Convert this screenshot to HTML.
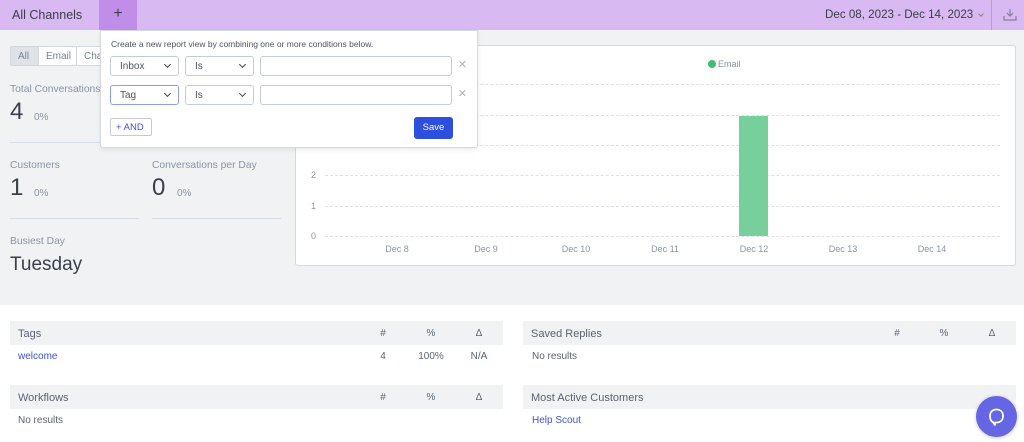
<!DOCTYPE html>
<html><head><meta charset="utf-8"><style>
*{box-sizing:border-box;margin:0;padding:0}
body{width:1024px;height:442px;overflow:hidden;background:#fff;font-family:"Liberation Sans",sans-serif;color:#3c4858;position:relative}
.a{position:absolute}
.t{font-size:10px;color:#8a94a3}
.sel{position:absolute;height:20px;border:1px solid #c6ccd4;border-radius:3px;background:#fff;font-size:10px;color:#4a5563;padding:4px 0 0 9px}
.sel:after{content:"";position:absolute;right:8px;top:5px;width:4px;height:4px;border-right:1.3px solid #444;border-bottom:1.3px solid #444;transform:rotate(45deg)}
.grid{position:absolute;left:325px;width:675px;border-top:1px dashed #dde1e6}
.yl{position:absolute;left:311px;font-size:9px;color:#8a94a3}
.xl{position:absolute;top:244px;font-size:9px;color:#8a94a3;width:40px;text-align:center}
.th{position:absolute;height:24px;background:#f1f2f4;font-size:11px;color:#5a6472;padding:7px 0 0 8px}
.c{position:absolute;font-size:10px;color:#5a6472;width:30px;text-align:center}
</style></head><body>
<div class="a" style="left:0;top:0;width:1024px;height:30px;background:#d8b9f2"></div>
<div class="a" style="left:12px;top:8px;font-size:12.5px;color:#3a3f4a">All Channels</div>
<div class="a" style="left:99px;top:0;width:38px;height:30px;background:#c08ee8;text-align:center;font-size:16px;line-height:28px;color:#3a3f4a">+</div>
<div class="a" style="left:825px;top:8px;font-size:11.6px;color:#3a3f4a">Dec 08, 2023 - Dec 14, 2023</div>
<div class="a" style="left:979px;top:12px;width:4px;height:4px;border-right:1px solid #888;border-bottom:1px solid #888;transform:rotate(45deg)"></div>
<div class="a" style="left:991px;top:0;width:1px;height:30px;background:#b99ad6"></div>
<svg class="a" style="left:1003px;top:8px" width="14" height="13" viewBox="0 0 14 13"><path d="M7 1v7M4 5l3 3 3-3M1 8v4h12V8" fill="none" stroke="#8a7f99" stroke-width="1.2"/></svg>
<div class="a" style="left:0;top:30px;width:1024px;height:275px;background:#f1f2f4"></div>
<div class="a" style="left:10px;top:46px;width:100px;height:20px;border:1px solid #d3d8de;border-radius:2px;background:#fff;font-size:10px;color:#7a8491">
<span class="a" style="left:0;top:0;width:27px;height:18px;background:#dfe3e8;padding:4px 0 0 7px">All</span>
<span class="a" style="left:27px;top:0;width:1px;height:18px;background:#d3d8de"></span>
<span class="a" style="left:35px;top:4px">Email</span>
<span class="a" style="left:65px;top:0;width:1px;height:18px;background:#d3d8de"></span>
<span class="a" style="left:73px;top:4px">Cha</span></div>
<div class="a" style="left:10px;top:84px;font-size:10.3px;color:#8a94a3">Total Conversations</div>
<div class="a" style="left:10px;top:98px;font-size:24px;color:#3a3f4a">4</div>
<div class="a t" style="left:34px;top:112px">0%</div>
<div class="a" style="left:10px;top:142px;width:129px;height:1px;background:#d5dde6"></div>
<div class="a" style="left:10px;top:160px;font-size:10.3px;color:#8a94a3">Customers</div>
<div class="a" style="left:10px;top:174px;font-size:24px;color:#3a3f4a">1</div>
<div class="a t" style="left:34px;top:188px">0%</div>
<div class="a" style="left:152px;top:160px;font-size:10.3px;color:#8a94a3">Conversations per Day</div>
<div class="a" style="left:152px;top:174px;font-size:24px;color:#3a3f4a">0</div>
<div class="a t" style="left:177px;top:188px">0%</div>
<div class="a" style="left:10px;top:218px;width:129px;height:1px;background:#d5dde6"></div>
<div class="a" style="left:152px;top:218px;width:129px;height:1px;background:#d5dde6"></div>
<div class="a" style="left:10px;top:236px;font-size:10.3px;color:#8a94a3">Busiest Day</div>
<div class="a" style="left:10px;top:254px;font-size:19px;color:#3a3f4a">Tuesday</div>
<div class="a" style="left:295px;top:45px;width:721px;height:221px;background:#fff;border:1px solid #d5dae0;border-radius:3px"></div>
<div class="a" style="left:708px;top:60px;width:8px;height:8px;border-radius:50%;background:#3fc06e"></div>
<div class="a" style="left:718px;top:59px;font-size:9px;color:#8a94a3">Email</div>
<div class="grid" style="top:84px"></div><div class="grid" style="top:115px"></div><div class="grid" style="top:145px"></div>
<div class="grid" style="top:175px"></div><div class="grid" style="top:206px"></div><div class="grid" style="top:236px"></div>
<div class="yl" style="top:170px">2</div><div class="yl" style="top:201px">1</div><div class="yl" style="top:231px">0</div>
<div class="a" style="left:739px;top:116px;width:29px;height:120px;background:#77d09c"></div>
<div class="xl" style="left:377px">Dec 8</div><div class="xl" style="left:466px">Dec 9</div><div class="xl" style="left:556px">Dec 10</div><div class="xl" style="left:645px">Dec 11</div><div class="xl" style="left:734px">Dec 12</div><div class="xl" style="left:823px">Dec 13</div><div class="xl" style="left:912px">Dec 14</div>
<div class="a" style="left:100px;top:30px;width:378px;height:118px;background:#fff;border:1px solid #d5dae0;border-radius:0 0 3px 3px;box-shadow:0 2px 5px rgba(0,0,0,.08)"></div>
<div class="a" style="left:111px;top:39px;font-size:8.5px;color:#4a5563">Create a new report view by combining one or more conditions below.</div>
<div class="sel" style="left:110px;top:56px;width:69px">Inbox</div>
<div class="sel" style="left:185px;top:56px;width:69px">Is</div>
<div class="a" style="left:260px;top:56px;width:192px;height:20px;border:1px solid #c6ccd4;border-radius:3px"></div>
<div class="a" style="left:458px;top:56px;font-size:15px;color:#b0b6bd">×</div>
<div class="sel" style="left:110px;top:85px;width:69px;border-color:#8a9df0">Tag</div>
<div class="sel" style="left:185px;top:85px;width:69px">Is</div>
<div class="a" style="left:260px;top:85px;width:192px;height:20px;border:1px solid #c6ccd4;border-radius:3px"></div>
<div class="a" style="left:458px;top:85px;font-size:15px;color:#b0b6bd">×</div>
<div class="a" style="left:110px;top:118px;width:42px;height:18px;border:1px solid #c6ccd4;border-radius:2px;font-size:9.5px;color:#3c52d8;padding:3px 0 0 5px">+ AND</div>
<div class="a" style="left:414px;top:117px;width:39px;height:22px;background:#2d4fe0;border-radius:3px;color:#fff;font-size:9.5px;text-align:center;line-height:22px">Save</div>
<div class="th" style="left:10px;top:321px;width:493px">Tags</div>
<div class="c" style="left:368px;top:328px">#</div><div class="c" style="left:416px;top:328px">%</div><div class="c" style="left:464px;top:328px">Δ</div>
<div class="a" style="left:18px;top:351px;font-size:10px;color:#3c52d8">welcome</div>
<div class="c" style="left:368px;top:351px">4</div><div class="c" style="left:409px;top:351px;width:44px">100%</div><div class="c" style="left:464px;top:351px">N/A</div>
<div class="th" style="left:10px;top:385px;width:493px">Workflows</div>
<div class="c" style="left:368px;top:392px">#</div><div class="c" style="left:416px;top:392px">%</div><div class="c" style="left:464px;top:392px">Δ</div>
<div class="a" style="left:18px;top:415px;font-size:10px;color:#5a6472">No results</div>
<div class="th" style="left:523px;top:321px;width:493px">Saved Replies</div>
<div class="c" style="left:882px;top:328px">#</div><div class="c" style="left:929px;top:328px">%</div><div class="c" style="left:977px;top:328px">Δ</div>
<div class="a" style="left:532px;top:351px;font-size:10px;color:#5a6472">No results</div>
<div class="th" style="left:523px;top:385px;width:493px">Most Active Customers</div>
<div class="a" style="left:532px;top:415px;font-size:10px;color:#3c52d8">Help Scout</div>
<div class="a" style="left:976px;top:396px;width:41px;height:41px;border-radius:50%;background:#6466e3;box-shadow:0 1px 4px rgba(0,0,0,.2)"></div>
<svg class="a" style="left:986px;top:406px" width="21" height="21" viewBox="0 0 21 21"><path d="M10.5 3.5c4 0 6.5 2.5 6.5 6.5s-2.5 6.5-6.5 6.5h-1.5l0 2.5-2-2.8C5 15.3 4 13 4 10c0-4 2.5-6.5 6.5-6.5z" fill="none" stroke="#fff" stroke-width="1.8" stroke-linejoin="round"/></svg>
</body></html>
